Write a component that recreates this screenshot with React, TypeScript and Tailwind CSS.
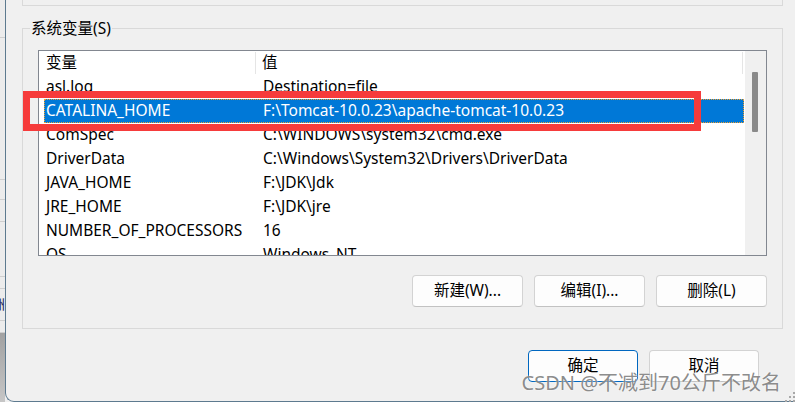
import React from 'react'

const rows: { name: string; value: string; selected?: boolean }[] = [
  { name: 'asl.log', value: 'Destination=file' },
  { name: 'CATALINA_HOME', value: 'F:\\Tomcat-10.0.23\\apache-tomcat-10.0.23', selected: true },
  { name: 'ComSpec', value: 'C:\\WINDOWS\\system32\\cmd.exe' },
  { name: 'DriverData', value: 'C:\\Windows\\System32\\Drivers\\DriverData' },
  { name: 'JAVA_HOME', value: 'F:\\JDK\\Jdk' },
  { name: 'JRE_HOME', value: 'F:\\JDK\\jre' },
  { name: 'NUMBER_OF_PROCESSORS', value: '16' },
  { name: 'OS', value: 'Windows_NT' },
]

function WinButton({ label, primary, className = '' }: { label: string; primary?: boolean; className?: string }) {
  return (
    <button
      className={
        'h-[32px] rounded-[4px] bg-[#fdfdfd] text-black leading-none ' +
        (primary ? 'border border-[#0067c0] ' : 'border border-[#d3d3d3] border-b-[#c2c2c2] ') +
        className
      }
    >
      {label}
    </button>
  )
}

function ResizeGrip() {
  return (
    <svg width="11" height="11" viewBox="0 0 11 11" className="absolute right-0 bottom-0">
      {[
        [9, 1], [9, 5], [5, 5], [9, 9], [5, 9], [1, 9],
      ].map(([x, y], i) => (
        <rect key={i} x={x} y={y} width="2" height="2" fill="#a8a8a8" />
      ))}
    </svg>
  )
}

export default function App() {
  return (
    <div className="w-[795px] h-[402px] relative overflow-hidden flex bg-[#f0f0f0] font-['Noto_Sans','Noto_Sans_CJK_SC',sans-serif] text-[15.5px] text-black">
      {/* window behind the dialog */}
      <div className="w-[5px] shrink-0 h-full flex flex-col bg-[#ececec] overflow-hidden">
        <div className="h-[38px] shrink-0 border-b border-[#cfcfcf]" />
        <div className="h-[142px] shrink-0 border-b border-[#cfcfcf]" />
        <div className="h-[20px] shrink-0 border-b border-[#cfcfcf]" />
        <div className="h-[22px] shrink-0 border-b border-[#cfcfcf]" />
        <div className="h-[55px] shrink-0 border-b border-[#cfcfcf]" />
        <div className="h-[12px] shrink-0 border-b border-[#cfcfcf]" />
        <div className="h-[32px] shrink-0 border-b border-[#cfcfcf] relative">
          <span className="absolute top-[8px] -left-[9px] text-[14px] leading-none text-[#1a2a60]">洲</span>
        </div>
        <div className="h-[12px] shrink-0 border-b border-[#cfcfcf]" />
        <div className="flex-1 bg-gradient-to-b from-[#a2a2a2] to-[#c6c6c6]" />
      </div>

      {/* dialog */}
      <div className="flex-1 h-[402px] border-l border-b border-[#5d7a8f] rounded-bl-[9px] bg-[#f0f0f0] flex flex-col">
        {/* end of the user variables group */}
        <div className="ml-[16px] w-[761px] h-[6px] border-x border-b border-[#d9d9d9]" />

        <fieldset className="mt-[12px] ml-[16px] w-[761px] border border-[#d9d9d9] p-0 pb-[21px] m-0 min-w-0">
          <legend className="ml-[7px] px-[1px] leading-[20px] text-[15.5px]">系统变量(S)</legend>

          <div className="mt-[12px] ml-[15px] w-[729px] h-[206px] border border-[#828790] bg-white flex overflow-hidden">
            <div className="flex-1 flex flex-col overflow-hidden">
              {/* header */}
              <div className="h-[24px] shrink-0 flex items-center">
                <div className="w-[217px] h-[22px] pl-[7px] flex items-center border-r border-[#e5e5e5]">变量</div>
                <div className="flex-1 h-[22px] pl-[6px] flex items-center border-r border-[#e5e5e5] mr-[2px]">值</div>
              </div>
              {rows.map((r) => (
                <div
                  key={r.name}
                  className={
                    'ml-[5px] w-[700px] h-[24px] shrink-0 flex items-center whitespace-nowrap ' +
                    (r.selected
                      ? 'bg-[#0078d7] text-white outline-1 outline-dotted outline-[#f0a030] -outline-offset-1'
                      : '')
                  }
                >
                  <div className="w-[212px] pl-[2px]">{r.name}</div>
                  <div className="pl-[7px]">{r.value}</div>
                </div>
              ))}
            </div>
            {/* scrollbar */}
            <div className="w-[21px] shrink-0 bg-[#f0f0f0] pt-[21px] pl-[7px]">
              <div className="w-[6px] h-[60px] bg-[#8a8a8a] rounded-[1px]" />
            </div>
          </div>

          <div className="mt-[19px] flex justify-end gap-[11px] pr-[15px]">
            <WinButton label="新建(W)..." className="w-[111px]" />
            <WinButton label="编辑(I)..." className="w-[111px]" />
            <WinButton label="删除(L)" className="w-[111px]" />
          </div>
        </fieldset>

        <div className="mt-[21px] ml-[16px] w-[761px] flex justify-end gap-[11px] pr-[24px]">
          <WinButton label="确定" primary className="w-[110px]" />
          <WinButton label="取消" className="w-[110px]" />
        </div>
      </div>

      {/* annotation rectangle */}
      <div className="absolute left-[23px] top-[91px] w-[678px] h-[40px] border-[7px] border-[#f63b3b]" />

      {/* watermark */}
      <div className="absolute right-[14px] bottom-[9px] text-[20px] leading-none text-[#7d7d7d]/90 whitespace-nowrap [text-shadow:0_0_2px_rgba(255,255,255,0.9)]">
        CSDN @不减到70公斤不改名
      </div>

      <ResizeGrip />
    </div>
  )
}
